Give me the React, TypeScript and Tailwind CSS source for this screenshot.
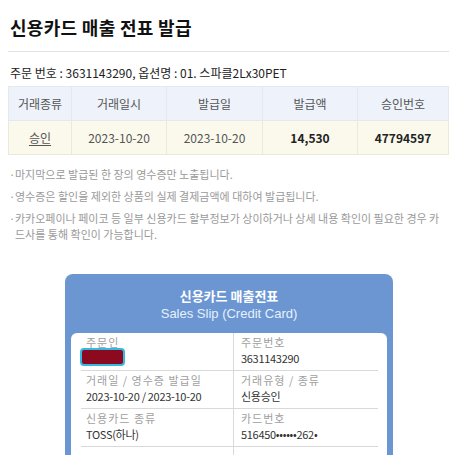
import React from "react";

const notes = [
  "마지막으로 발급된 한 장의 영수증만 노출됩니다.",
  "영수증은 할인을 제외한 상품의 실제 결제금액에 대하여 발급됩니다.",
  "카카오페이나 페이코 등 일부 신용카드 할부정보가 상이하거나 상세 내용 확인이 필요한 경우 카드사를 통해 확인이 가능합니다.",
];

const slipRows = [
  [
    { label: "주문인", value: null },
    { label: "주문번호", value: "3631143290" },
  ],
  [
    { label: "거래일 / 영수증 발급일", value: "2023-10-20 / 2023-10-20" },
    { label: "거래유형 / 종류", value: "신용승인" },
  ],
  [
    { label: "신용카드 종류", value: "TOSS(하나)" },
    { label: "카드번호", value: "516450••••••262•" },
  ],
  [
    { label: "", value: "" },
    { label: "", value: "" },
  ],
];

export default function App() {
  return (
    <div
      className="w-[474px] h-[455px] overflow-hidden bg-white text-[#333]"
      style={{ fontFamily: '"Noto Sans CJK KR", "Noto Sans", sans-serif' }}
    >
      <div className="pl-2 w-[449px]">
        {/* 제목 */}
        <h1 className="pl-[2px] pt-[14px] pb-[11px] text-[18px] leading-[26px] font-bold text-[#111] tracking-[0.3px] border-b border-[#e3e3e3]">
          신용카드 매출 전표 발급
        </h1>

        <p className="pl-[2px] mt-[13px] text-[12px] leading-[16px] text-[#222]">
          주문 번호 : 3631143290, 옵션명 : 01. 스파클2Lx30PET
        </p>

        {/* 거래 내역 표 */}
        <table className="mt-[5px] w-full border-collapse text-[12px] text-center">
          <thead>
            <tr className="bg-[#eef3fb] h-[34px] text-[#555]">
              <th className="w-[63px] font-normal border border-[#e4e8ef]">거래종류</th>
              <th className="w-[95px] font-normal border border-[#e4e8ef]">거래일시</th>
              <th className="w-[96px] font-normal border border-[#e4e8ef]">발급일</th>
              <th className="w-[95px] font-normal border border-[#e4e8ef]">발급액</th>
              <th className="font-normal border border-[#e4e8ef]">승인번호</th>
            </tr>
          </thead>
          <tbody>
            <tr className="bg-[#fbf9ec] h-[34px] text-[#555]">
              <td className="border border-[#ebe9dc]">
                <span className="underline underline-offset-2">승인</span>
              </td>
              <td className="border border-[#ebe9dc]">2023-10-20</td>
              <td className="border border-[#ebe9dc]">2023-10-20</td>
              <td className="border border-[#ebe9dc] font-bold text-[#222]">14,530</td>
              <td className="border border-[#ebe9dc] font-bold text-[#222]">47794597</td>
            </tr>
          </tbody>
        </table>

        {/* 안내 문구 */}
        <ul className="mt-[11px] w-[440px] flex flex-col gap-[6px] text-[11px] leading-[16px] text-[#9a9a9a]">
          {notes.map((n, i) => (
            <li key={i} className="flex pl-[1px]">
              <span className="w-[6px] shrink-0">·</span>
              <span className="pr-[2px]">{n}</span>
            </li>
          ))}
        </ul>
      </div>

      {/* 매출전표 카드 */}
      <div className="mt-[32px] ml-[65px] w-[328px] rounded-t-[8px] bg-[#6b96d2] px-[6px] pb-[20px]">
        <div className="pt-[13px] pb-[11px] text-center text-white">
          <div className="text-[13px] leading-[18px] font-bold">신용카드 매출전표</div>
          <div className="text-[13px] leading-[17px] text-[#e8f0fb]" style={{ fontFamily: "Arial, 'Liberation Sans', sans-serif" }}>
            Sales Slip (Credit Card)
          </div>
        </div>
        <div className="rounded-t-[6px] bg-white pl-[10px] pr-[9px]">
          {slipRows.map((row, ri) => (
            <div key={ri} className="grid grid-cols-[153px_1fr] h-[38px] border-b border-[#d9d9d9]">
              {row.map((cell, ci) => (
                <div
                  key={ci}
                  className={
                    ci === 0
                      ? "pl-[5px] pt-[2px] border-r border-[#d9d9d9]"
                      : "pl-[7px] pt-[2px]"
                  }
                >
                  <div className="text-[11px] leading-[15px] text-[#a0a0a0] tracking-[1px]">{cell.label}</div>
                  {cell.value === null ? (
                    <div className="-mt-[2px] -ml-[6px] w-[45px] h-[18px] rounded-[4px] bg-[#8c0a1f] border-2 border-[#35b9e3]" />
                  ) : (
                    <div className="mt-[1px] text-[11px] leading-[15px] text-[#333] tracking-[-0.3px]">{cell.value}</div>
                  )}
                </div>
              ))}
            </div>
          ))}
        </div>
      </div>
    </div>
  );
}
